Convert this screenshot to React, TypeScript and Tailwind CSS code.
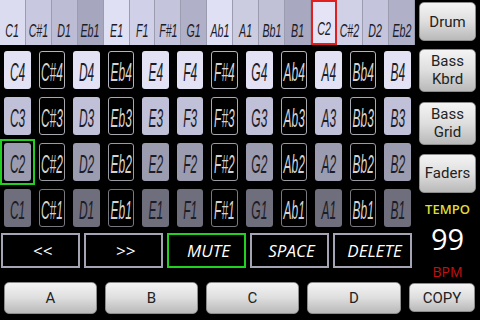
import React from "react";

const topKeys = [
  { n: "C1", c: "bg-[#dcdcf0]" },
  { n: "C#1", c: "bg-[#c8c8e0]" },
  { n: "D1", c: "bg-[#bcbcd4]" },
  { n: "Eb1", c: "bg-[#a6a6be]" },
  { n: "E1", c: "bg-[#e0e0f4]" },
  { n: "F1", c: "bg-[#d0d0e8]" },
  { n: "F#1", c: "bg-[#c4c4dc]" },
  { n: "G1", c: "bg-[#b0b0c8]" },
  { n: "Ab1", c: "bg-[#e0e0f4]" },
  { n: "A1", c: "bg-[#cccce0]" },
  { n: "Bb1", c: "bg-[#c0c0d6]" },
  { n: "B1", c: "bg-[#a8a8c0]" },
  { n: "C2", c: "bg-[#e4e4f6]" },
  { n: "C#2", c: "bg-[#d0d0e6]" },
  { n: "D2", c: "bg-[#c4c4dc]" },
  { n: "Eb2", c: "bg-[#b0b0c8]" },
];

const names = ["C", "C#", "D", "Eb", "E", "F", "F#", "G", "Ab", "A", "Bb", "B"];
const blackIdx = [1, 3, 6, 8, 10];

// per octave row: white fill, black border
const rowStyle = [
  { oct: 4, white: "bg-[#e2e2f4]", border: "border-[#b4b4bc]" },
  { oct: 3, white: "bg-[#c0c0d8]", border: "border-[#a8a8b0]" },
  { oct: 2, white: "bg-[#9c9cb0]", border: "border-[#9a9aa2]" },
  { oct: 1, white: "bg-[#6e6e7c]", border: "border-[#78787f]" },
];

function GrayButton({ children, className }: { children: React.ReactNode; className?: string }) {
  return (
    <div
      className={
        "flex items-center justify-center rounded-[5px] border border-[#8c8c8c] bg-gradient-to-b from-[#f4f4f4] via-[#dedede] to-[#b9b9b9] text-center font-['Roboto'] text-[15px] leading-[18px] text-[#222] " +
        (className ?? "")
      }
    >
      {children}
    </div>
  );
}

function CtrlButton({ label, active }: { label: string; active?: boolean }) {
  return (
    <div
      className={
        "flex h-[35px] w-[79px] items-center justify-center border-2 bg-black font-['Open_Sans'] text-[17px] italic text-white " +
        (active ? "border-[#22d022]" : "border-[#a4a4b4]")
      }
    >
      <span className="pl-[4px]">{label}</span>
    </div>
  );
}

export default function App() {
  return (
    <div className="flex h-[320px] w-[480px] flex-col overflow-hidden bg-black">
      <div className="flex h-[280px]">
        {/* left: keys, grid, controls */}
        <div className="flex w-[415px] flex-col">
          <div className="flex h-[45px]">
            {topKeys.map((k) => (
              <div
                key={k.n}
                className={
                  "flex w-[26px] items-end justify-center pb-[4px] " +
                  k.c +
                  (k.n === "C2" ? " border-2 border-[#e02020]" : " border-r border-[#9c9cb0]")
                }
              >
                <span className="inline-block scale-x-[0.56] font-['Liberation_Sans'] text-[19px] italic leading-[20px] text-[#1c1c28] whitespace-nowrap">
                  {k.n}
                </span>
              </div>
            ))}
          </div>

          <div className="mt-[2px] grid grid-cols-12">
            {rowStyle.map((r) =>
              names.map((nm, i) => {
                const black = blackIdx.includes(i);
                const sel = r.oct === 2 && i === 0;
                return (
                  <div
                    key={nm + r.oct}
                    className={
                      "h-[46px] " +
                      (sel ? "border-2 border-[#22d022] p-[2px]" : "p-[4px]")
                    }
                  >
                    <div
                      className={
                        "flex h-full items-center justify-center rounded-[3px] pt-[4px] " +
                        (black ? "border-[1.5px] bg-black " + r.border : r.white)
                      }
                    >
                      <span
                        className={
                          "inline-block scale-x-[0.46] font-['Liberation_Sans'] text-[26px] italic leading-[28px] whitespace-nowrap " +
                          (black ? "text-[#d4d4d4]" : "text-[#1c1c28]")
                        }
                      >
                        {nm}
                        {r.oct}
                      </span>
                    </div>
                  </div>
                );
              })
            )}
          </div>

          <div className="mt-[2px] flex gap-[4px] pl-[1px]">
            <CtrlButton label="<<" />
            <CtrlButton label=">>" />
            <CtrlButton label="MUTE" active />
            <CtrlButton label="SPACE" />
            <CtrlButton label="DELETE" />
          </div>
        </div>

        {/* right column */}
        <div className="flex w-[65px] flex-col items-start pl-[4px]">
          <GrayButton className="mt-[2px] h-[40px] w-[57px]">Drum</GrayButton>
          <GrayButton className="mt-[8px] h-[43px] w-[57px]">
            Bass
            <br />
            Kbrd
          </GrayButton>
          <GrayButton className="mt-[10px] h-[44px] w-[57px]">
            Bass
            <br />
            Grid
          </GrayButton>
          <GrayButton className="mt-[9px] h-[40px] w-[57px]">Faders</GrayButton>
          <div className="mt-[8px] w-[57px] text-center font-['Open_Sans'] text-[13px] font-semibold leading-[16px] text-[#dcdc3c]">
            TEMPO
          </div>
          <div className="mt-[7px] w-[57px] text-center font-['Open_Sans'] text-[29px] leading-[30px] text-white">
            99
          </div>
          <div className="mt-[10px] w-[57px] text-center font-['Open_Sans'] text-[14px] leading-[16px] text-[#c81010]">
            BPM
          </div>
        </div>
      </div>

      <div className="flex h-[40px] items-start gap-[8px] pl-[4px] pt-[2px]">
        <GrayButton className="h-[32px] w-[93px] text-[#22dd22]">A</GrayButton>
        <GrayButton className="h-[32px] w-[93px]">B</GrayButton>
        <GrayButton className="h-[32px] w-[93px]">C</GrayButton>
        <GrayButton className="h-[32px] w-[94px]">D</GrayButton>
        <GrayButton className="mt-[1px] h-[29px] w-[66px]">COPY</GrayButton>
      </div>
    </div>
  );
}
